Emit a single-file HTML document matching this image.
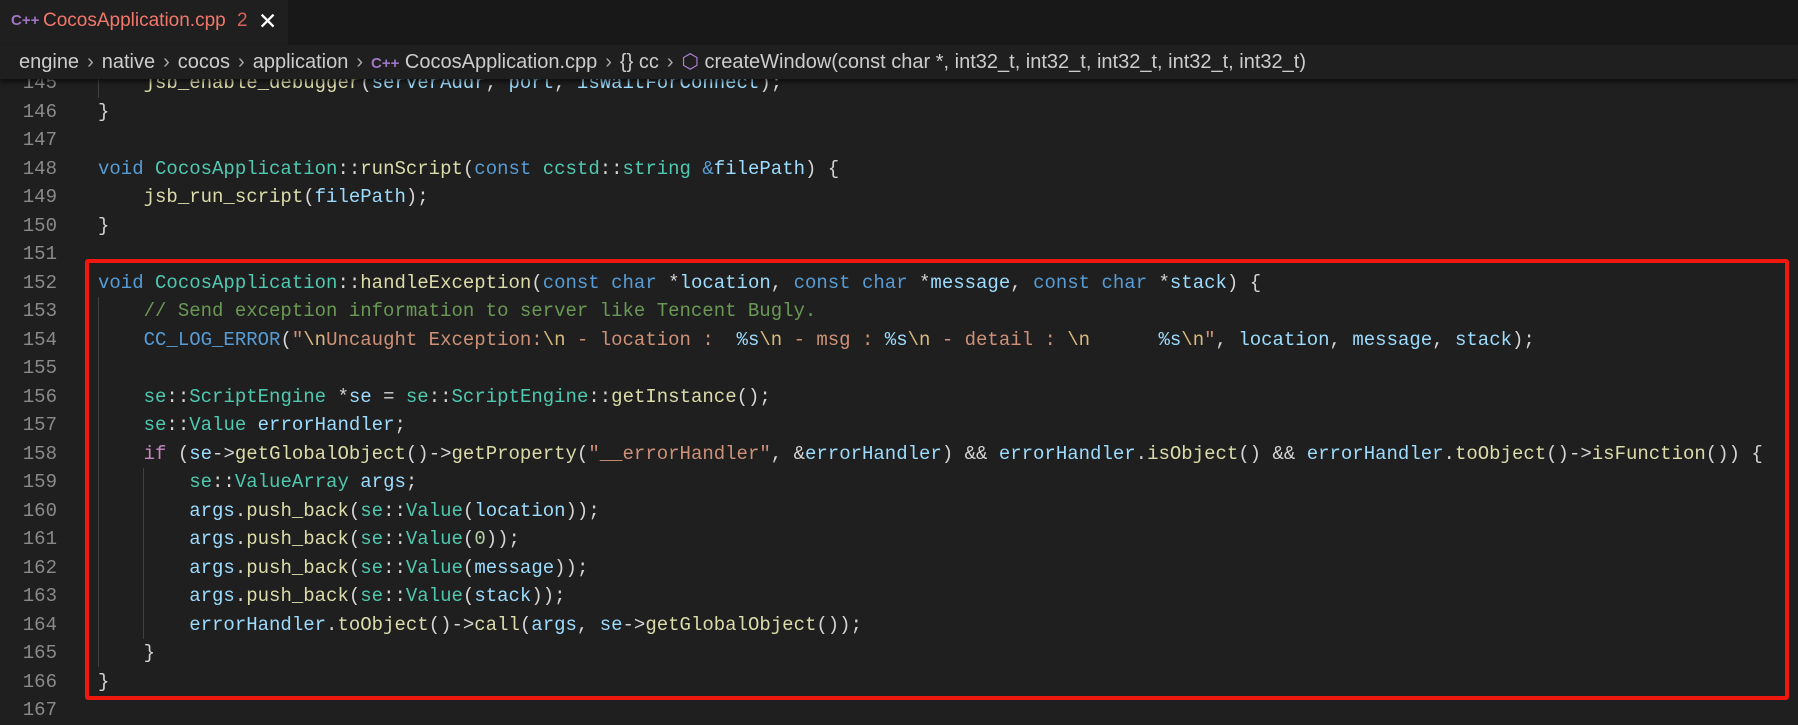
<!DOCTYPE html>
<html><head><meta charset="utf-8"><style>
*{margin:0;padding:0;box-sizing:border-box}
body{width:1798px;height:708px;background:#1f1f1f;overflow:hidden;position:relative;font-family:"Liberation Sans",sans-serif}
.tabbar{position:absolute;left:0;top:0;width:1798px;height:45px;background:#181818}
.tab{position:absolute;left:0;top:0;width:288px;height:45px;background:#1f1f1f}
.tab .ic{position:absolute;left:11px;top:12px;color:#a074c4;font-weight:bold;font-size:15px}
.tab .nm{position:absolute;left:43px;top:10px;color:#f1776a;font-size:19px}
.tab .n2{position:absolute;left:237px;top:10px;color:#d4635a;font-size:19px}
.tab .x{position:absolute;left:258px;top:8px;color:#fff;font-size:23px}
.bc{position:absolute;left:0;top:45px;width:1798px;height:34px;background:#1f1f1f;color:#cccccc;font-size:20px;line-height:34px;padding-left:19px;white-space:nowrap;box-shadow:0 3px 4px #0008;z-index:5}
.bc .s{color:#aaa;margin:0 8px}
.bc .cp{color:#a074c4;font-weight:bold;font-size:15px}
.code{position:absolute;left:0;top:0;width:1798px;font-family:"Liberation Mono",monospace;font-size:19px;color:#d4d4d4}
.ln{position:absolute;left:0;width:57px;text-align:right;color:#8a8a8a;height:28.5px;line-height:28.5px}
.tx{position:absolute;left:98px;white-space:pre;height:28.5px;line-height:28.5px}
.g{position:absolute;width:1px;background:#404040}
.k{color:#569cd6}.t{color:#4ec9b0}.f{color:#dcdcaa}.v{color:#9cdcfe}.s1{color:#ce9178}.c{color:#6a9955}.e{color:#d7ba7d}.m{color:#c586c0}.nu{color:#b5cea8}
.box{position:absolute;left:85px;top:259px;width:1704px;height:441px;border:4px solid #f0170f;border-radius:3px;z-index:3}
</style></head><body>
<div class="tabbar"><div class="tab"><span class="ic">C++</span><span class="nm">CocosApplication.cpp</span><span class="n2">2</span><span class="x">✕</span></div></div>
<div class="bc">engine<span class="s">›</span>native<span class="s">›</span>cocos<span class="s">›</span>application<span class="s">›</span><span class="cp">C++</span> CocosApplication.cpp<span class="s">›</span>{} cc<span class="s">›</span><span style="color:#b180d7">⬡</span> createWindow(const char *, int32_t, int32_t, int32_t, int32_t, int32_t)</div>
<div class="code">
<div class="g" style="left:98px;top:70px;height:28px"></div>
<div class="g" style="left:98px;top:297px;height:370px"></div>
<div class="g" style="left:143px;top:468px;height:171px"></div>

<div class="ln" style="top:69px">145</div><div class="tx" style="top:69px">    <span class="f">jsb_enable_debugger</span>(<span class="v">serverAddr</span>, <span class="v">port</span>, <span class="v">isWaitForConnect</span>);</div>
<div class="ln" style="top:97.5px">146</div><div class="tx" style="top:97.5px">}</div>
<div class="ln" style="top:126px">147</div>
<div class="ln" style="top:154.5px">148</div><div class="tx" style="top:154.5px"><span class="k">void</span> <span class="t">CocosApplication</span>::<span class="f">runScript</span>(<span class="k">const</span> <span class="t">ccstd</span>::<span class="t">string</span> <span class="k">&amp;</span><span class="v">filePath</span>) {</div>
<div class="ln" style="top:183px">149</div><div class="tx" style="top:183px">    <span class="f">jsb_run_script</span>(<span class="v">filePath</span>);</div>
<div class="ln" style="top:211.5px">150</div><div class="tx" style="top:211.5px">}</div>
<div class="ln" style="top:240px">151</div>
<div class="ln" style="top:268.5px">152</div><div class="tx" style="top:268.5px"><span class="k">void</span> <span class="t">CocosApplication</span>::<span class="f">handleException</span>(<span class="k">const</span> <span class="k">char</span> *<span class="v">location</span>, <span class="k">const</span> <span class="k">char</span> *<span class="v">message</span>, <span class="k">const</span> <span class="k">char</span> *<span class="v">stack</span>) {</div>
<div class="ln" style="top:297px">153</div><div class="tx" style="top:297px">    <span class="c">// Send exception information to server like Tencent Bugly.</span></div>
<div class="ln" style="top:325.5px">154</div><div class="tx" style="top:325.5px">    <span class="k">CC_LOG_ERROR</span>(<span class="s1">"</span><span class="e">\n</span><span class="s1">Uncaught Exception:</span><span class="e">\n</span><span class="s1"> - location :  </span><span class="v">%s</span><span class="e">\n</span><span class="s1"> - msg : </span><span class="v">%s</span><span class="e">\n</span><span class="s1"> - detail : </span><span class="e">\n</span><span class="s1">      </span><span class="v">%s</span><span class="e">\n</span><span class="s1">"</span>, <span class="v">location</span>, <span class="v">message</span>, <span class="v">stack</span>);</div>
<div class="ln" style="top:354px">155</div>
<div class="ln" style="top:382.5px">156</div><div class="tx" style="top:382.5px">    <span class="t">se</span>::<span class="t">ScriptEngine</span> *<span class="v">se</span> = <span class="t">se</span>::<span class="t">ScriptEngine</span>::<span class="f">getInstance</span>();</div>
<div class="ln" style="top:411px">157</div><div class="tx" style="top:411px">    <span class="t">se</span>::<span class="t">Value</span> <span class="v">errorHandler</span>;</div>
<div class="ln" style="top:439.5px">158</div><div class="tx" style="top:439.5px">    <span class="m">if</span> (<span class="v">se</span>-&gt;<span class="f">getGlobalObject</span>()-&gt;<span class="f">getProperty</span>(<span class="s1">"__errorHandler"</span>, &amp;<span class="v">errorHandler</span>) &amp;&amp; <span class="v">errorHandler</span>.<span class="f">isObject</span>() &amp;&amp; <span class="v">errorHandler</span>.<span class="f">toObject</span>()-&gt;<span class="f">isFunction</span>()) {</div>
<div class="ln" style="top:468px">159</div><div class="tx" style="top:468px">        <span class="t">se</span>::<span class="t">ValueArray</span> <span class="v">args</span>;</div>
<div class="ln" style="top:496.5px">160</div><div class="tx" style="top:496.5px">        <span class="v">args</span>.<span class="f">push_back</span>(<span class="t">se</span>::<span class="t">Value</span>(<span class="v">location</span>));</div>
<div class="ln" style="top:525px">161</div><div class="tx" style="top:525px">        <span class="v">args</span>.<span class="f">push_back</span>(<span class="t">se</span>::<span class="t">Value</span>(<span class="nu">0</span>));</div>
<div class="ln" style="top:553.5px">162</div><div class="tx" style="top:553.5px">        <span class="v">args</span>.<span class="f">push_back</span>(<span class="t">se</span>::<span class="t">Value</span>(<span class="v">message</span>));</div>
<div class="ln" style="top:582px">163</div><div class="tx" style="top:582px">        <span class="v">args</span>.<span class="f">push_back</span>(<span class="t">se</span>::<span class="t">Value</span>(<span class="v">stack</span>));</div>
<div class="ln" style="top:610.5px">164</div><div class="tx" style="top:610.5px">        <span class="v">errorHandler</span>.<span class="f">toObject</span>()-&gt;<span class="f">call</span>(<span class="v">args</span>, <span class="v">se</span>-&gt;<span class="f">getGlobalObject</span>());</div>
<div class="ln" style="top:639px">165</div><div class="tx" style="top:639px">    }</div>
<div class="ln" style="top:667.5px">166</div><div class="tx" style="top:667.5px">}</div>
<div class="ln" style="top:696px">167</div>
</div>
<div class="box"></div>
</body></html>
